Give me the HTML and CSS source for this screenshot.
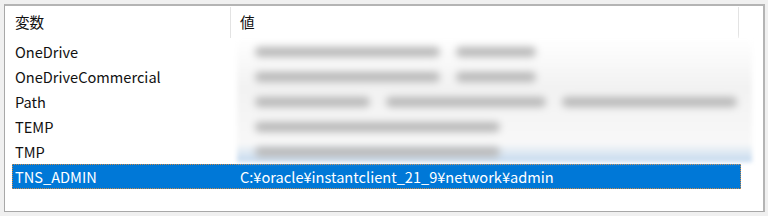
FILE: index.html
```html
<!DOCTYPE html>
<html lang="ja">
<head>
<meta charset="utf-8">
<link rel="stylesheet" href="styles.css">
</head>
<body>
<div class="panel">
  <div class="header">
    <div class="hcell name">変数</div>
    <div class="hcell value">値</div>
    <div class="hcell rest"></div>
  </div>
  <div class="rows">
    <div class="row"><div class="name">OneDrive</div><div class="value"></div></div>
    <div class="row"><div class="name">OneDriveCommercial</div><div class="value"></div></div>
    <div class="row"><div class="name">Path</div><div class="value"></div></div>
    <div class="row"><div class="name">TEMP</div><div class="value"></div></div>
    <div class="row"><div class="name">TMP</div><div class="value"></div></div>
    <div class="row selected"><div class="name">TNS_ADMIN</div><div class="value">C:¥oracle¥instantclient_21_9¥network¥admin</div></div>
    <div class="redact">
      <div class="bline"><span class="w1"></span><span class="w2"></span></div>
      <div class="bline"><span class="w1"></span><span class="w2"></span></div>
      <div class="bline"><span class="w3"></span><span class="w4"></span><span class="w5"></span></div>
      <div class="bline"><span class="w6"></span></div>
      <div class="bline"><span class="w6"></span></div>
    </div>
  </div>
</div>
</body>
</html>
```

FILE: styles.css
```css
html, body {
  margin: 0;
  padding: 0;
  background: #f0f0f0;
}
body {
  padding: 4px;
  width: 768px;
  height: 216px;
  box-sizing: border-box;
  font-family: "Noto Sans CJK JP", "Noto Sans", sans-serif;
  font-size: 14.6px;
  color: #111;
}
.panel {
  width: 761px;
  height: 208px;
  box-sizing: border-box;
  background: #fff;
  border: 1px solid #a8a8a8;
  border-top: 2px solid #b4b4b4;
  border-right: 2px solid #b4b4b4;
  padding: 0 0 0 7px;
}
.header {
  display: flex;
  height: 32px;
}
.hcell {
  display: flex;
  align-items: center;
  border-right: 1px solid #e3e3e3;
  margin: 1px 0 0;
  padding-bottom: 3px;
}
.hcell.name { width: 219px; padding-left: 3px; box-sizing: border-box; }
.hcell.value { width: 508px; padding-left: 9px; box-sizing: border-box; }
.hcell.rest { border-right: none; }
.rows {
  position: relative;
  padding-top: 1px;
}
.row {
  display: flex;
  height: 25px;
  align-items: center;
  width: 729px;
  box-sizing: border-box;
  border: 1px solid transparent;
}
.row .name { width: 220px; padding-left: 2px; box-sizing: border-box; }
.row .value { padding-left: 7px; }
.row.selected {
  background: #0078d7;
  color: #fff;
  border: 1px dotted #c98a4a;
}
.redact {
  position: absolute;
  left: 225px;
  top: 0;
  width: 515px;
  height: 124px;
  background: linear-gradient(to bottom, #fff 0, #f2f2f2 40%, #f8f8f8 85%, #c4d9ee 100%);
  filter: blur(2px);
  padding: 7px 0 0 18px;
  box-sizing: border-box;
}
.bline {
  display: flex;
  gap: 16px;
  height: 25px;
  align-items: flex-start;
  padding-top: 2px;
  box-sizing: border-box;
}
.bline span {
  display: block;
  height: 10px;
  background: #b8b8b8;
  border-radius: 5px;
  filter: blur(3px);
}
.w1 { width: 185px; }
.w2 { width: 80px; }
.w3 { width: 115px; }
.w4 { width: 160px; }
.w5 { width: 175px; }
.w6 { width: 245px; }
```
